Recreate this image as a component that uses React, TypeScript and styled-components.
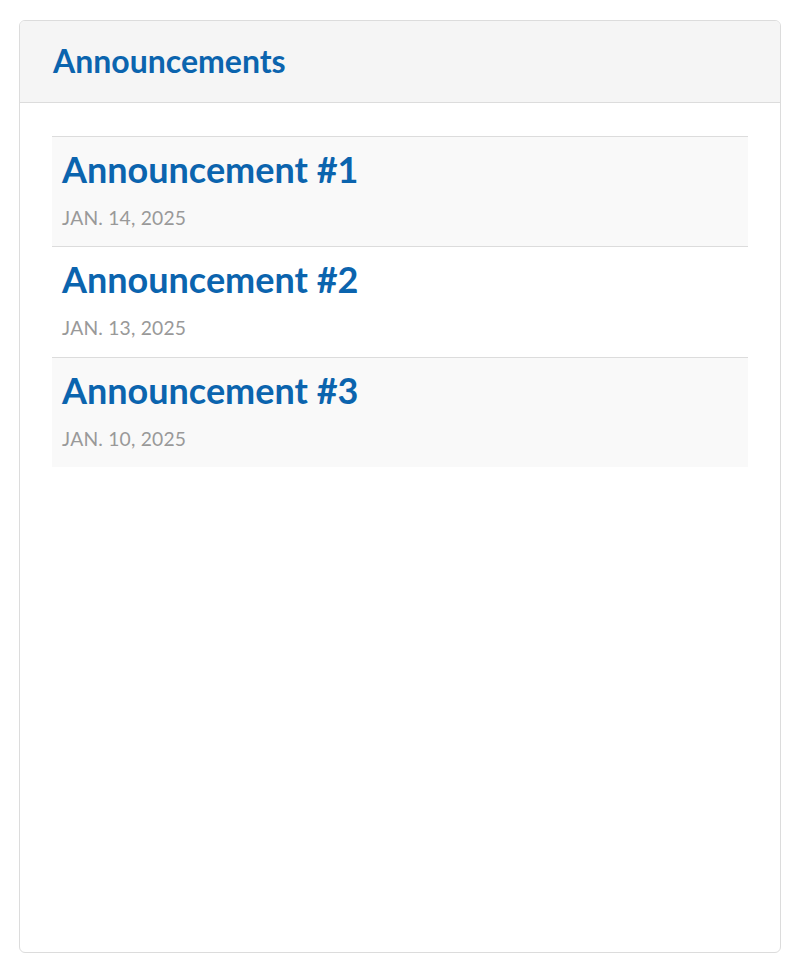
import styled, { createGlobalStyle } from 'styled-components'

const GlobalStyle = createGlobalStyle`
  html, body {
    margin: 0;
    padding: 0;
    background: #ffffff;
  }
  body {
    font-family: Lato, "Noto Sans", sans-serif;
  }
`

type Announcement = {
  id: number
  title: string
  date: string
}

const announcements: Announcement[] = [
  { id: 1, title: 'Announcement #1', date: 'JAN. 14, 2025' },
  { id: 2, title: 'Announcement #2', date: 'JAN. 13, 2025' },
  { id: 3, title: 'Announcement #3', date: 'JAN. 10, 2025' },
]

export default function App() {
  return (
    <>
      <GlobalStyle />
      <Page>
        <Card>
          <CardHeader>
            <HeaderTitle>Announcements</HeaderTitle>
          </CardHeader>
          <CardBody>
            <List>
              {announcements.map((item, i) => (
                <Item key={item.id} $striped={i % 2 === 0}>
                  <ItemTitle href="#">{item.title}</ItemTitle>
                  <ItemDate>{item.date}</ItemDate>
                </Item>
              ))}
            </List>
          </CardBody>
        </Card>
      </Page>
    </>
  )
}

const Page = styled.div`
  padding: 20px 19px 19px 19px;
  height: 972px;
  box-sizing: border-box;
  display: flex;
`

const Card = styled.section`
  flex: 1;
  display: flex;
  flex-direction: column;
  border: 1.5px solid #dcdcdc;
  border-radius: 6px;
  overflow: hidden;
  background: #ffffff;
`

const CardHeader = styled.header`
  height: 81.5px;
  flex-shrink: 0;
  box-sizing: border-box;
  background: #f5f5f5;
  border-bottom: 1.5px solid #dcdcdc;
  padding: 21px 33px 0 33px;
`

const HeaderTitle = styled.h2`
  margin: 0;
  font-size: 32px;
  line-height: 1.2;
  font-weight: 700;
  color: #0b64ae;
`

const CardBody = styled.div`
  flex: 1;
  padding: 33px 32px;
`

const List = styled.ul`
  list-style: none;
  margin: 0;
  padding: 0;
`

const Item = styled.li<{ $striped: boolean }>`
  height: 110.5px;
  box-sizing: border-box;
  border-top: 1.5px solid #dcdcdc;
  background: ${(p) => (p.$striped ? '#f9f9f9' : '#ffffff')};
  padding: 12px 10px 0 10px;
  display: flex;
  flex-direction: column;
  gap: 17px;
`

const ItemTitle = styled.a`
  font-size: 36px;
  line-height: 40px;
  font-weight: 700;
  color: #0b64ae;
  text-decoration: none;
`

const ItemDate = styled.span`
  font-size: 19.3px;
  line-height: 24px;
  color: #999999;
  letter-spacing: 0.2px;
`
